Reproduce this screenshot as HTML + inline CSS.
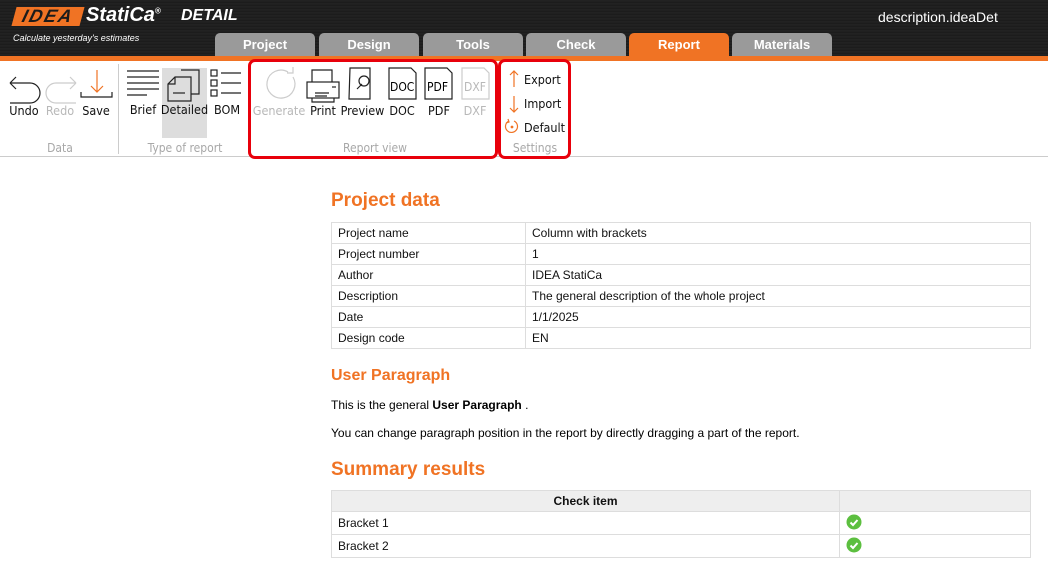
<!DOCTYPE html>
<html><head><meta charset="utf-8"><style>
*{margin:0;padding:0;box-sizing:border-box}
body{width:1048px;height:571px;overflow:hidden;background:#fff;font-family:"Liberation Sans",sans-serif;position:relative}
.a{position:absolute}
.hdr{left:0;top:0;width:1048px;height:56px;background:repeating-linear-gradient(180deg,#1b1b1b 0,#2a2a2a 1px,#161616 2px,#222 3px)}
.tab{position:absolute;top:33px;height:23px;width:100px;background:#9a9a9a;border-radius:5px 5px 0 0;color:#fff;font-weight:bold;font-size:13px;text-align:center;line-height:24px}
.lbl{position:absolute;font-size:12.5px;color:#111;text-align:center;font-family:"DejaVu Sans Condensed","Liberation Sans",sans-serif}
.g{color:#b8b8b8}
.grp{position:absolute;top:141px;font-size:12px;color:#a8a8a8;text-align:center;font-family:"DejaVu Sans Condensed","Liberation Sans",sans-serif}
.h{position:absolute;color:#f07324;font-weight:bold}
table{border-collapse:collapse;position:absolute;font-size:12px;color:#111}
td{border:1px solid #ddd;height:21px;padding:0 6px}
</style></head><body>
<div class="a hdr"></div>
<div class="a" style="left:14px;top:7px;width:68px;height:19px;background:#f07324;transform:skewX(-15deg);color:#1b1b1b;font-weight:bold;font-style:italic;font-size:18px;line-height:19px;text-align:center;letter-spacing:2px">IDEA</div>
<div class="a" style="left:86px;top:4px;color:#fff;font-weight:bold;font-style:italic;font-size:20px">StatiCa<sup style="font-size:8px">®</sup></div>
<div class="a" style="left:181px;top:7px;color:#fff;font-weight:bold;font-style:italic;font-size:16px">DETAIL</div>
<div class="a" style="left:13px;top:33px;color:#fff;font-style:italic;font-size:9px">Calculate yesterday's estimates</div>
<div class="a" style="left:878px;top:9px;color:#fff;font-size:14px">description.ideaDet</div>
<div class="tab" style="left:215px">Project</div>
<div class="tab" style="left:319px">Design</div>
<div class="tab" style="left:423px">Tools</div>
<div class="tab" style="left:526px">Check</div>
<div class="tab" style="left:629px;background:#f07324">Report</div>
<div class="tab" style="left:732px">Materials</div>
<div class="a" style="left:0;top:56px;width:1048px;height:5px;background:#f07324"></div>
<div class="a" style="left:0;top:156px;width:1048px;height:1px;background:#ccc"></div>
<div class="a" style="left:118px;top:64px;width:1px;height:90px;background:#ccc"></div>
<div class="a" style="left:162px;top:68px;width:45px;height:70px;background:#ddd"></div>
<svg class="a" style="left:0;top:60px" width="580" height="60" fill="none" stroke-width="1.2">
<g stroke="#222"><path d="M10 23h20a10 10 0 0 1 0 20H10M10 23l6-6M10 23l6 6"/></g>
<g stroke="#ccc"><path d="M76 23H56a10 10 0 0 0 0 20h20M76 23l-6-6M76 23l-6 6"/></g>
<path d="M97 10v22M91 26l6 6 6-6" stroke="#f07324"/>
<path d="M81 32v5h31v-5" stroke="#222"/>
<g stroke="#222"><path d="M127 11h32M127 17h32M127 23h32M127 29h32M127 35h20"/>
<path d="M181 10h18v24h-8"/><path d="M175 17h16v24h-23V24zM168 24h7v-7"/><path d="M173 33h12"/>
<rect x="211" y="10" width="6" height="6"/><rect x="211" y="20" width="6" height="6"/><rect x="211" y="30" width="6" height="6"/><path d="M221 13h20M221 23h20M221 33h20"/></g>
<path d="M293 17a14 14 0 1 1-5-5M293 7v6h-6" stroke="#ccc"/>
<g stroke="#222"><rect x="307" y="22" width="32" height="16"/><path d="M312 22V10h20v12M312 38v4h22v-4M315 33h14M315 36h12"/><path d="M332 27h4"/>
<path d="M350 8h20v31h-21zM357 29l5-5"/><circle cx="364" cy="21" r="5"/>
<path d="M389 8h22l5 5v26h-27z"/><path d="M425 8h22l5 5v26h-27z"/></g>
<g stroke="#ccc"><path d="M462 8h22l5 5v26h-27z"/></g>
<path d="M514 11v16M510 15l4-4 4 4M514 36v16M510 48l4 4 4-4" stroke="#f07324"/>
</svg>
<div class="a" style="left:390px;top:80px;font-size:12px;font-family:'DejaVu Sans Condensed',sans-serif">DOC</div>
<div class="a" style="left:427px;top:80px;font-size:12px;font-family:'DejaVu Sans Condensed',sans-serif">PDF</div>
<div class="a g" style="left:464px;top:80px;font-size:12px;font-family:'DejaVu Sans Condensed',sans-serif">DXF</div>
<div class="lbl" style="left:4px;top:103px;width:40px">Undo</div>
<div class="lbl g" style="left:42px;top:103px;width:36px">Redo</div>
<div class="lbl" style="left:78px;top:103px;width:36px">Save</div>
<div class="lbl" style="left:126px;top:102px;width:34px">Brief</div>
<div class="lbl" style="left:159px;top:102px;width:51px">Detailed</div>
<div class="lbl" style="left:210px;top:102px;width:34px">BOM</div>
<div class="lbl g" style="left:252px;top:103px;width:54px">Generate</div>
<div class="lbl" style="left:306px;top:103px;width:34px">Print</div>
<div class="lbl" style="left:339px;top:103px;width:47px">Preview</div>
<div class="lbl" style="left:387px;top:103px;width:30px">DOC</div>
<div class="lbl" style="left:424px;top:103px;width:30px">PDF</div>
<div class="lbl g" style="left:460px;top:103px;width:30px">DXF</div>
<div class="lbl" style="left:524px;top:72px">Export</div>
<div class="lbl" style="left:524px;top:96px">Import</div>
<div class="lbl" style="left:524px;top:120px">Default</div>
<svg class="a" style="left:503px;top:118px" width="18" height="18" fill="none" stroke="#f07324" stroke-width="1.2"><path d="M6 3a6 6 0 1 0 5 0M5 1l1 3-3 1"/><circle cx="9" cy="9" r=".8" fill="#f07324"/></svg>
<div class="grp" style="left:30px;width:60px">Data</div>
<div class="grp" style="left:140px;width:90px">Type of report</div>
<div class="grp" style="left:320px;width:110px">Report view</div>
<div class="grp" style="left:505px;width:60px">Settings</div>
<div class="a" style="left:248px;top:59px;width:250px;height:100px;border:3.5px solid #e8000b;border-radius:7px"></div>
<div class="a" style="left:498px;top:59px;width:73px;height:100px;border:3.5px solid #e8000b;border-radius:7px"></div>

<div class="h" style="left:331px;top:190px;font-size:19px">Project data</div>
<table style="left:331px;top:222px;width:700px">
<tr><td style="width:194px">Project name</td><td>Column with brackets</td></tr>
<tr><td>Project number</td><td>1</td></tr>
<tr><td>Author</td><td>IDEA StatiCa</td></tr>
<tr><td>Description</td><td>The general description of the whole project</td></tr>
<tr><td>Date</td><td>1/1/2025</td></tr>
<tr><td>Design code</td><td>EN</td></tr>
</table>
<div class="h" style="left:331px;top:367px;font-size:16px">User Paragraph</div>
<div class="a" style="left:331px;top:398px;font-size:12px">This is the general <b>User Paragraph</b> .</div>
<div class="a" style="left:331px;top:426px;font-size:12px">You can change paragraph position in the report by directly dragging a part of the report.</div>
<div class="h" style="left:331px;top:459px;font-size:19px">Summary results</div>
<table style="left:331px;top:490px;width:700px">
<tr style="background:#eee"><td style="width:508px;text-align:center;font-weight:bold;height:21px">Check item</td><td></td></tr>
<tr><td style="height:23px">Bracket 1</td><td><svg width="16" height="16"><circle cx="8" cy="8" r="7.5" fill="#5cbf3f"/><path d="M4.5 8.5l2.5 2.5 4.5-5" stroke="#fff" stroke-width="2" fill="none"/></svg></td></tr>
<tr><td style="height:23px">Bracket 2</td><td><svg width="16" height="16"><circle cx="8" cy="8" r="7.5" fill="#5cbf3f"/><path d="M4.5 8.5l2.5 2.5 4.5-5" stroke="#fff" stroke-width="2" fill="none"/></svg></td></tr>
</table>
</body></html>
